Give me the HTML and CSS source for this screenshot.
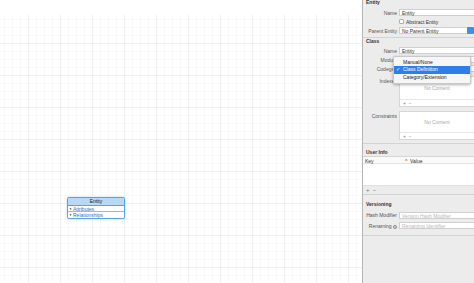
FILE: index.html
```html
<!DOCTYPE html>
<html lang="en">
<head>
    <meta charset="UTF-8">
    <title>Data Model Editor</title>
    <link rel="stylesheet" href="styles.css">
</head>
<body>
    <div class="window">
        <!-- Model canvas -->
        <section class="canvas">
            <div class="canvas-top"></div>
            <div class="grid">
                <div class="entity-node">
                    <div class="entity-title">Entity</div>
                    <div class="entity-row"><span class="tri">&#9660;</span>Attributes</div>
                    <div class="entity-row"><span class="tri">&#9660;</span>Relationships</div>
                </div>
            </div>
        </section>

        <!-- Data model inspector -->
        <aside class="inspector">
            <div class="section">
                <div class="section-title">Entity</div>
                <div class="row">
                    <label>Name</label>
                    <div class="field">Entity</div>
                </div>
                <div class="row">
                    <label></label>
                    <div class="check"><span class="box"></span>Abstract Entity</div>
                </div>
                <div class="row">
                    <label>Parent Entity</label>
                    <div class="field popup">No Parent Entity<span class="stepper"></span></div>
                </div>
            </div>

            <div class="section">
                <div class="section-title">Class</div>
                <div class="row">
                    <label>Name</label>
                    <div class="field">Entity</div>
                </div>
                <div class="row">
                    <label>Module</label>
                    <div class="field"></div>
                </div>
                <div class="row codegen">
                    <label>Codegen</label>
                    <div class="field"></div>
                    <ul class="menu">
                        <li>Manual/None</li>
                        <li class="selected"><span class="tick">&#10003;</span>Class Definition</li>
                        <li>Category/Extension</li>
                    </ul>
                </div>
                <div class="row tall">
                    <label>Indexes</label>
                    <div class="table-box">
                        <div class="empty">No Content</div>
                        <div class="plusminus">+ &nbsp;&minus;</div>
                    </div>
                </div>
                <div class="row tall">
                    <label>Constraints</label>
                    <div class="table-box short">
                        <div class="empty">No Content</div>
                        <div class="plusminus">+ &nbsp;&minus;</div>
                    </div>
                </div>
            </div>

            <div class="section userinfo">
                <div class="section-title">User Info</div>
                <div class="kv-head">
                    <span class="key">Key</span>
                    <span class="val">^ &nbsp;Value</span>
                </div>
                <div class="kv-body"></div>
                <div class="kv-foot">+ &nbsp;&minus;</div>
            </div>

            <div class="section last">
                <div class="section-title">Versioning</div>
                <div class="row">
                    <label>Hash Modifier</label>
                    <div class="field placeholder">Version Hash Modifier</div>
                </div>
                <div class="row">
                    <label>Renaming <span class="info">i</span></label>
                    <div class="field placeholder">Renaming Identifier</div>
                </div>
            </div>
        </aside>
    </div>
</body>
</html>
```

FILE: styles.css
```css
/* Basic Reset */
* {
    margin: 0;
    padding: 0;
    box-sizing: border-box;
}
body {
    font-family: "Liberation Sans", Arial, sans-serif;
    font-size: 5px;
    color: #333;
    background: #fff;
}

.window {
    display: flex;
    width: 474px;
    height: 283px;
    overflow: hidden;
}

/* Canvas */
.canvas {
    flex: 1;
    display: flex;
    flex-direction: column;
    background: #fff;
}
.canvas-top {
    height: 15px;
}
.grid {
    flex: 1;
    position: relative;
    background-color: #fff;
    background-image:
        linear-gradient(to right, rgba(0, 0, 0, 0.035) 1px, transparent 1px),
        linear-gradient(to bottom, rgba(0, 0, 0, 0.035) 1px, transparent 1px),
        linear-gradient(to right, rgba(0, 0, 0, 0.02) 1px, transparent 1px),
        linear-gradient(to bottom, rgba(0, 0, 0, 0.02) 1px, transparent 1px);
    background-size: 32px 32px, 32px 32px, 8px 8px, 8px 8px;
    background-position: -4px 0, 0 -4px, -4px 0, 0 -4px;
}

.entity-node {
    position: absolute;
    left: 67px;
    top: 182px;
    width: 58px;
    border: 1px solid #5aa2e6;
    border-radius: 2px;
    background: #fff;
    box-shadow: 0 0 2px rgba(90, 162, 230, 0.5);
}
.entity-title {
    background: #b7d8f7;
    border-bottom: 1px solid #5aa2e6;
    text-align: center;
    height: 8px;
    line-height: 7px;
    color: #222;
}
.entity-row {
    height: 6px;
    line-height: 6px;
    padding-left: 1px;
    color: #2d6fc0;
    border-bottom: 1px solid #8fbdeb;
}
.entity-row:last-child {
    border-bottom: none;
}
.tri {
    font-size: 3px;
    margin-right: 1px;
    color: #333;
    vertical-align: 1px;
}

/* Inspector */
.inspector {
    width: 112px;
    background: #ececec;
    border-left: 1px solid #b5b5b5;
    display: flex;
    flex-direction: column;
}
.section {
    padding: 0 0 3px 0;
    border-bottom: 1px solid #d3d3d3;
    display: flex;
    flex-direction: column;
    gap: 2px;
}
.section-title {
    font-weight: bold;
    padding-left: 3px;
    height: 7px;
    line-height: 7px;
    color: #333;
}
.section:first-child .section-title {
    height: 5px;
    line-height: 5px;
    margin-bottom: 2px;
}

.row {
    display: flex;
    align-items: center;
    height: 7px;
    position: relative;
}
.row label {
    width: 36px;
    padding-right: 2px;
    text-align: right;
    color: #555;
    flex-shrink: 0;
}
.field {
    flex: 1;
    height: 7px;
    line-height: 6px;
    background: #fff;
    border: 1px solid #cfcfcf;
    border-right: none;
    padding-left: 2px;
    color: #333;
    position: relative;
}
.field.placeholder {
    color: #b9b9b9;
}
.popup {
    border-radius: 1px;
}
.stepper {
    position: absolute;
    right: 0;
    top: -1px;
    width: 7px;
    height: 7px;
    background: #3d8ff0;
    border-radius: 1px;
}

.check {
    display: flex;
    align-items: center;
    gap: 2px;
    color: #333;
}
.box {
    width: 5px;
    height: 5px;
    background: #fff;
    border: 1px solid #b0b0b0;
    border-radius: 1px;
}

.info {
    display: inline-block;
    width: 4px;
    height: 4px;
    border: 1px solid #888;
    border-radius: 50%;
    font-size: 3px;
    line-height: 2px;
    text-align: center;
    color: #777;
}

/* Tables */
.row.tall {
    height: auto;
    align-items: flex-start;
    margin-top: 2px;
}
.row.tall label {
    padding-top: 2px;
}
.table-box {
    flex: 1;
    height: 31px;
    background: #fff;
    border: 1px solid #d6d6d6;
    border-right: none;
    display: flex;
    flex-direction: column;
}
.table-box.short {
    height: 29px;
}
.empty {
    flex: 1;
    display: flex;
    align-items: center;
    justify-content: center;
    color: #a8a8a8;
}
.plusminus {
    height: 7px;
    line-height: 7px;
    padding-left: 3px;
    color: #888;
    border-top: 1px solid #e6e6e6;
}

/* Popup menu */
.menu {
    position: absolute;
    left: 30px;
    top: -9px;
    width: 78px;
    list-style: none;
    background: #f6f6f6;
    border: 1px solid #c8c8c8;
    border-radius: 2px;
    box-shadow: 0 1px 3px rgba(0, 0, 0, 0.3);
    padding: 1.5px 0;
    z-index: 2;
}
.menu li {
    height: 7.5px;
    line-height: 7.5px;
    padding-left: 9px;
    color: #222;
    position: relative;
}
.menu li.selected {
    background: #2f7fea;
    color: #fff;
}
.tick {
    position: absolute;
    left: 2px;
}

/* User info */
.userinfo {
    gap: 0;
    padding-bottom: 0;
}
.userinfo .section-title {
    margin: 5px 0 0;
}
.kv-head {
    display: flex;
    height: 8px;
    line-height: 8px;
    border-top: 1px solid #d6d6d6;
    border-bottom: 1px solid #e2e2e2;
    background: #fafafa;
}
.kv-head .key {
    width: 40px;
    padding-left: 2px;
}
.kv-head .val {
    padding-left: 2px;
}
.kv-body {
    height: 21px;
    background: #fff;
}
.kv-foot {
    height: 9px;
    line-height: 8px;
    padding-left: 3px;
    color: #777;
    font-size: 6px;
    border-top: 1px solid #e0e0e0;
}
.section.last {
    padding-bottom: 6px;
    gap: 3.5px;
}
.last .section-title {
    margin-top: 6px;
}
```
